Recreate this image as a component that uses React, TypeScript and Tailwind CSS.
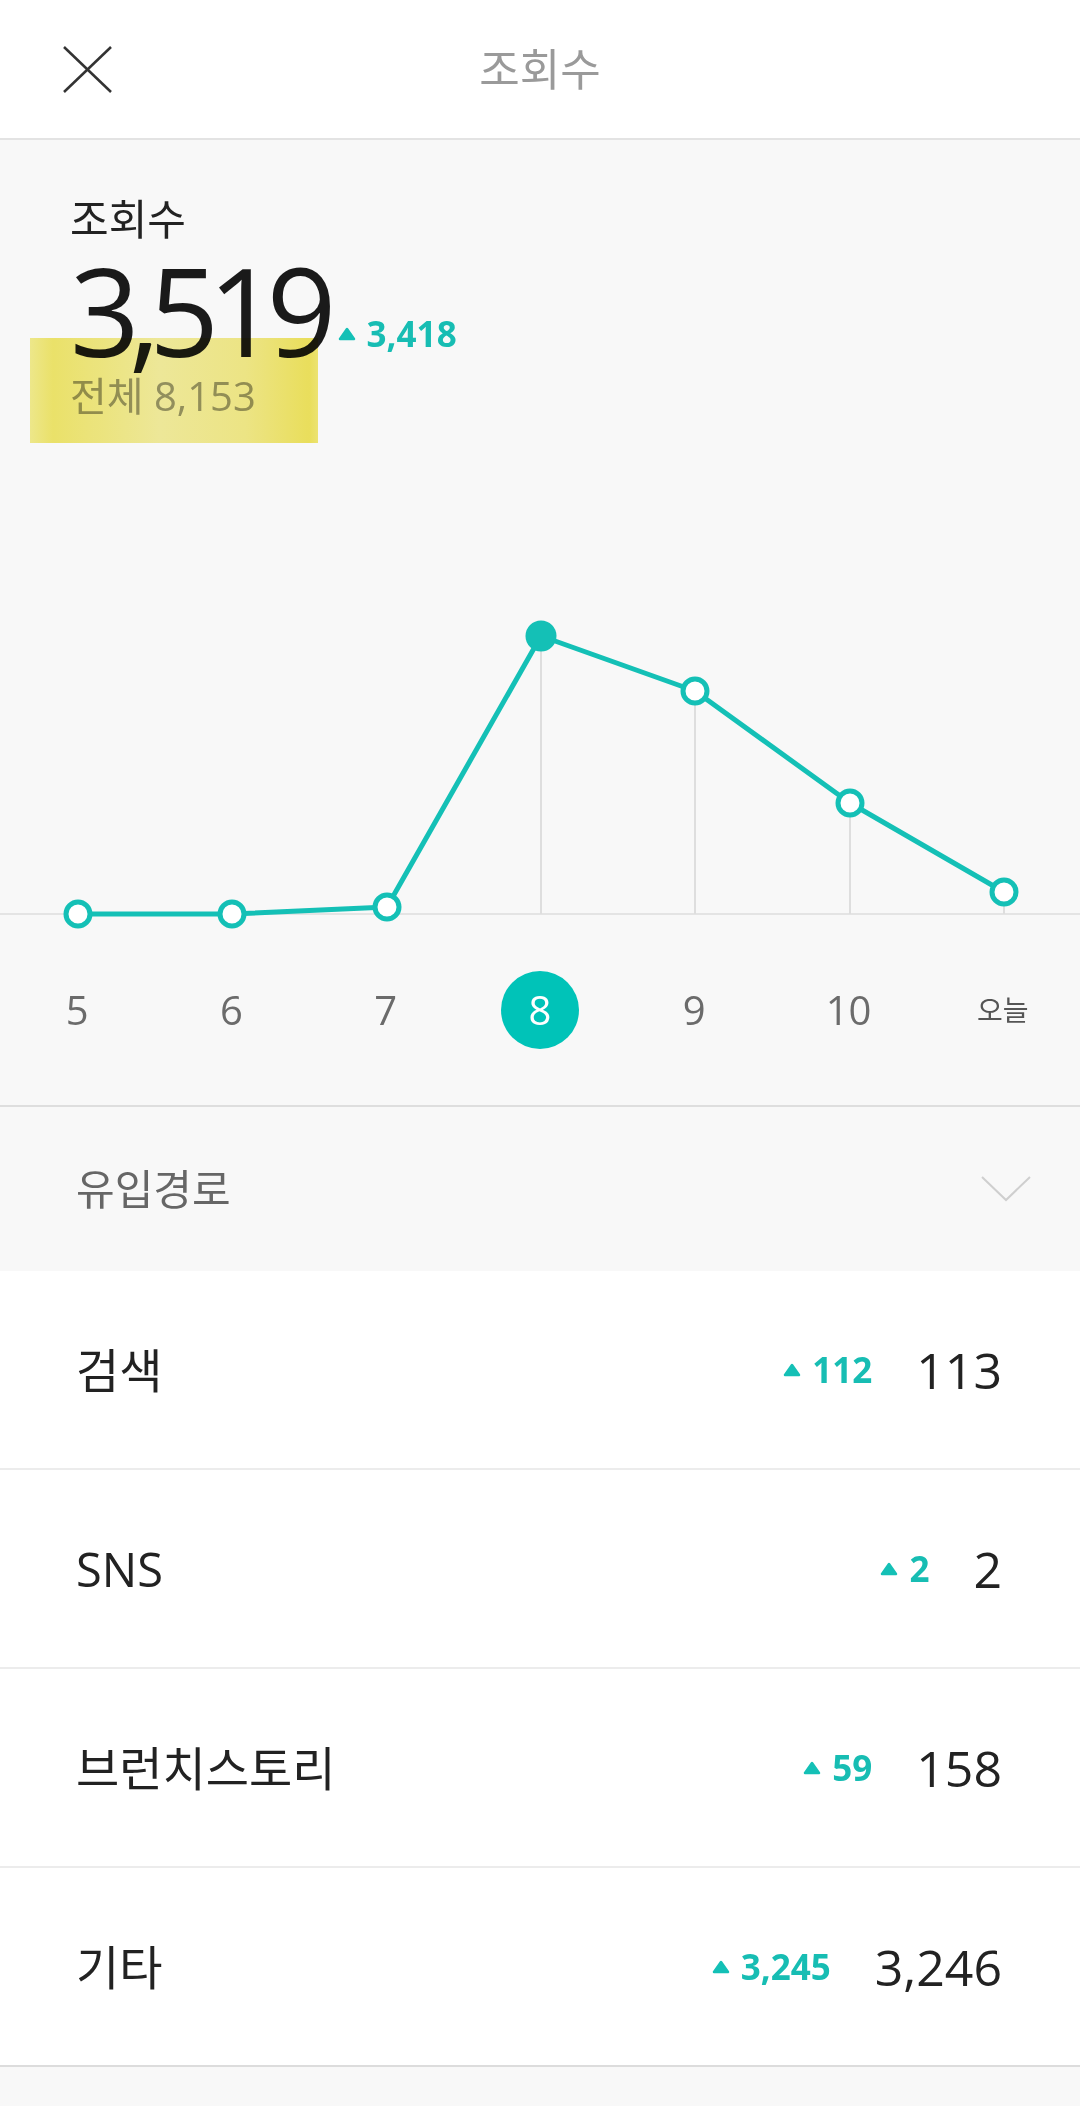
import React from 'react';

const TEAL = '#14c0b6';

function Tri() {
  return (
    <svg width="18" height="14" viewBox="0 0 18 14" className="block shrink-0">
      <path d="M9 2 L16 12 H2 Z" fill={TEAL} stroke={TEAL} strokeWidth="2.5" strokeLinejoin="round" />
    </svg>
  );
}

const pts: [number, number][] = [
  [78, 354],
  [232, 354],
  [387, 347],
  [541, 76],
  [695, 131],
  [850, 243],
  [1004, 332],
];

const rows = [
  { name: '검색', delta: '112', value: '113' },
  { name: 'SNS', delta: '2', value: '2' },
  { name: '브런치스토리', delta: '59', value: '158' },
  { name: '기타', delta: '3,245', value: '3,246' },
];

const labels = ['5', '6', '7', '8', '9', '10', '오늘'];

export default function App() {
  return (
    <div className="min-h-[2106px] w-[1080px] bg-[#f8f8f8] font-['Open_Sans','Noto_Sans_CJK_KR',sans-serif]">
      {/* Header */}
      <div className="grid h-[140px] grid-cols-[1fr_auto_1fr] items-center border-b-2 border-[#e3e3e3] bg-white">
        <div className="pl-[63px]">
          <svg width="49" height="47" viewBox="0 0 49 47" className="block">
            <line x1="1" y1="1" x2="48" y2="46" stroke="#333" strokeWidth="2.5" />
            <line x1="48" y1="1" x2="1" y2="46" stroke="#333" strokeWidth="2.5" />
          </svg>
        </div>
        <div className="text-[44px] leading-[52px] text-[#9a9a9a]">조회수</div>
        <div />
      </div>

      {/* Stats + chart */}
      <div className="relative border-b-2 border-[#dedede] bg-[#f8f8f8]">
        <div className="h-[280px] pl-[70px] pt-[56px]">
          <div className="text-[42px] leading-[46px] text-[#222]">조회수</div>
          <div className="mt-[7px] flex items-end">
            <div className="text-[122px] leading-[122px] tracking-[-11px] text-[#1a1a1a]">3,519</div>
            <div className="mb-[20px] ml-[12px] flex items-center">
              <Tri />
              <span className="ml-[11px] text-[35px] font-bold leading-[35px] text-[#17bdb3]">3,418</span>
            </div>
          </div>
          <div className="mt-[1px] text-[40px] leading-[48px] text-[#999]">전체 8,153</div>
        </div>

        <div className="mt-[140px]">
          <svg width="1080" height="380" viewBox="0 0 1080 380" className="block">
            <line x1="0" y1="354" x2="1080" y2="354" stroke="#e4e4e4" strokeWidth="2" />
            {pts.map(([x, y], i) => (
              <line key={'d' + i} x1={x} y1={y} x2={x} y2={354} stroke="#dedede" strokeWidth="2" />
            ))}
            <polyline
              points={pts.map(([x, y]) => `${x},${y}`).join(' ')}
              fill="none"
              stroke={TEAL}
              strokeWidth="5"
              strokeLinejoin="round"
            />
            {pts.map(([x, y], i) =>
              i === 3 ? (
                <circle key={'c' + i} cx={x} cy={y} r="15.5" fill={TEAL} />
              ) : (
                <circle key={'c' + i} cx={x} cy={y} r="12" fill="#fff" stroke={TEAL} strokeWidth="5" />
              )
            )}
          </svg>
        </div>

        <div className="grid h-[140px] grid-cols-7 items-center justify-items-center">
          {labels.map((l) =>
            l === '8' ? (
              <div key={l} className="flex h-[78px] w-[78px] items-center justify-center rounded-full bg-[#00c3b8] text-[40px] leading-none text-white">
                8
              </div>
            ) : l === '오늘' ? (
              <div key={l} className="text-[28px] leading-[34px] text-[#555]">
                {l}
              </div>
            ) : (
              <div key={l} className="text-[40px] leading-[48px] text-[#6b6b6b]">
                {l}
              </div>
            )
          )}
        </div>
        <div className="h-[25px]" />

        {/* highlight marker */}
        <div className="pointer-events-none absolute left-[30px] top-[198px] h-[105px] w-[288px] bg-[linear-gradient(90deg,#f4ee8e_0%,#f1e86c_8%,#f4ee9c_45%,#f3eb88_75%,#f0e55e_97%,#f3ea74_100%)] mix-blend-multiply" />
      </div>

      {/* 유입경로 */}
      <div className="flex h-[164px] items-center justify-between bg-[#f8f8f8] pl-[76px] pr-[49px]">
        <div className="text-[42px] leading-[50px] text-[#666]">유입경로</div>
        <svg width="50" height="26" viewBox="0 0 50 26" className="block">
          <polyline points="1,1 25,24 49,1" fill="none" stroke="#cfcfcf" strokeWidth="2" />
        </svg>
      </div>

      {/* Rows */}
      <div>
        {rows.map((r, i) => (
          <div
            key={r.name}
            className={
              i === rows.length - 1
                ? 'flex h-[199px] items-center border-b-2 border-[#dcdcdc] bg-white pl-[76px] pr-[78px]'
                : 'flex h-[199px] items-center border-b-2 border-[#ececec] bg-white pl-[76px] pr-[78px]'
            }
          >
            <div className="flex-1 text-[47px] leading-[54px] text-[#222]">{r.name}</div>
            <div className="flex items-center">
              <Tri />
              <span className="ml-[11px] text-[35px] font-bold leading-[40px] text-[#17bdb3]">{r.delta}</span>
            </div>
            <div className="ml-[44px] text-[50px] leading-[56px] text-[#222]">{r.value}</div>
          </div>
        ))}
      </div>
    </div>
  );
}
